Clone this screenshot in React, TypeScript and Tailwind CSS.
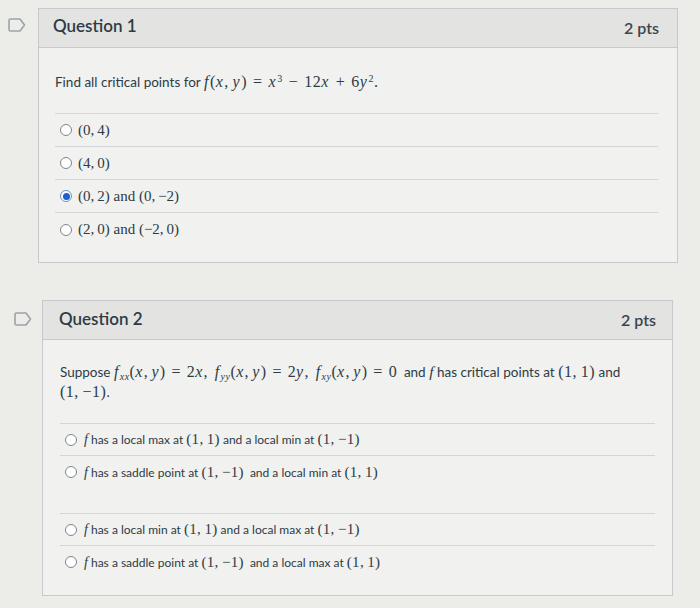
import React from "react";

const M = ({ children, className = "" }: { children: React.ReactNode; className?: string }) => (
  <span className={"font-['Liberation_Serif',serif] " + className}>{children}</span>
);
const I = ({ children }: { children: React.ReactNode }) => (
  <span className="italic pr-[1px]">{children}</span>
);
const Op = ({ children }: { children: React.ReactNode }) => (
  <span className="mx-[6px]">{children}</span>
);
const Sub = ({ children }: { children: React.ReactNode }) => (
  <sub className="text-[10px] italic tracking-[0.5px]">{children}</sub>
);

const Flag = () => (
  <svg width="18" height="14" viewBox="0 0 18 14" fill="none">
    <path d="M2.5 1 H12 L16.5 7 L12 13 H2.5 Q1 13 1 11.5 V2.5 Q1 1 2.5 1 Z" stroke="#9aa3a8" strokeWidth="1.6" strokeLinejoin="round" />
  </svg>
);

const Radio = ({ checked = false }: { checked?: boolean }) =>
  checked ? (
    <span className="w-[12px] h-[12px] rounded-full border border-[#6b8fc4] bg-white flex items-center justify-center shrink-0">
      <span className="w-[7px] h-[7px] rounded-full bg-[#1b5fd1]" />
    </span>
  ) : (
    <span className="w-[12px] h-[12px] rounded-full border border-[#7b868d] bg-white shrink-0" />
  );

const P = ({ a, b }: { a: string; b: string }) => (
  <M className="text-[15px] tracking-[0.3px]">
    ({a},&thinsp;{b})
  </M>
);

export default function App() {
  const q1opts: { node: React.ReactNode; checked?: boolean }[] = [
    { node: <M>(0,&thinsp;4)</M> },
    { node: <M>(4,&thinsp;0)</M> },
    { node: <M>(0,&thinsp;2) and (0,&thinsp;−2)</M>, checked: true },
    { node: <M>(2,&thinsp;0) and (−2,&thinsp;0)</M> },
  ];
  const F = <M className="italic text-[14px]">f</M>;
  const q2opts: React.ReactNode[] = [
    <>
      {F} has a local max at <P a="1" b="1" /> and a local min at <P a="1" b="−1" />
    </>,
    <>
      {F} has a saddle point at <P a="1" b="−1" />&nbsp;&nbsp;and a local min at <P a="1" b="1" />
    </>,
    <>
      {F} has a local min at <P a="1" b="1" /> and a local max at <P a="1" b="−1" />
    </>,
    <>
      {F} has a saddle point at <P a="1" b="−1" />&nbsp;&nbsp;and a local max at <P a="1" b="1" />
    </>,
  ];

  return (
    <div className="w-[700px] h-[608px] bg-[#ecece9] overflow-hidden font-['Lato','Open_Sans',sans-serif] text-[#2d3b45]">
      {/* Question 1 */}
      <div className="flex pt-[8px]">
        <div className="w-[38px] pl-[8px] pt-[10px]">
          <Flag />
        </div>
        <div className="w-[640px] h-[255px] border border-[#c5cacd] bg-[#f1f1ef] flex flex-col">
          <div className="h-[39px] bg-[#e3e3e1] border-b border-[#c5cacd] flex items-center justify-between pl-[14px] pr-[18px] pb-[4px]">
            <span className="text-[17px] font-semibold">Question 1</span>
            <span className="text-[16px] font-semibold text-[#3b454b] pt-[3px]">2 pts</span>
          </div>
          <div className="pl-[16px] pr-[19px] pt-[24px]">
            <div className="text-[13.5px] leading-[20px] h-[20px]">
              Find all critical points for{" "}
              <M className="text-[16px] tracking-[0.5px]">
                <I>f</I>(<I>x</I>,&thinsp;<I>y</I>)<Op>=</Op>
                <I>x</I>
                <sup className="text-[10px]">3</sup>
                <Op>−</Op>12<I>x</I>
                <Op>+</Op>6<I>y</I>
                <sup className="text-[10px]">2</sup>.
              </M>
            </div>
            <div className="mt-[21px] border-t border-[#d3d6d8]">
              {q1opts.map((o, i) => (
                <div
                  key={i}
                  className={
                    "h-[33px] flex items-center gap-[6px] pl-[5px] text-[15px] " +
                    (i < 3 ? "border-b border-[#d3d6d8]" : "")
                  }
                >
                  <Radio checked={o.checked} />
                  {o.node}
                </div>
              ))}
            </div>
          </div>
        </div>
      </div>

      {/* Question 2 */}
      <div className="flex mt-[37px]">
        <div className="w-[42px] pl-[14px] pt-[12px]">
          <Flag />
        </div>
        <div className="w-[631px] h-[296px] border border-[#c5cacd] bg-[#f1f1ef] flex flex-col">
          <div className="h-[39px] bg-[#e3e3e1] border-b border-[#c5cacd] flex items-center justify-between pl-[16px] pr-[16px] pb-[2px]">
            <span className="text-[17px] font-semibold">Question 2</span>
            <span className="text-[16px] font-semibold text-[#3b454b] pt-[2px]">2 pts</span>
          </div>
          <div className="pl-[17px] pr-[17px] pt-[22px]">
            <div className="text-[13.5px] leading-[20px] whitespace-nowrap">
              Suppose{" "}
              <M className="text-[16px] tracking-[0.3px]">
                <I>f</I>
                <Sub>xx</Sub>(<I>x</I>,&thinsp;<I>y</I>)<Op>=</Op>2<I>x</I>,&thinsp;&thinsp;<I>f</I>
                <Sub>yy</Sub>(<I>x</I>,&thinsp;<I>y</I>)<Op>=</Op>2<I>y</I>,&thinsp;&thinsp;<I>f</I>
                <Sub>xy</Sub>(<I>x</I>,&thinsp;<I>y</I>)<Op>=</Op>0
              </M>{" "}
              &nbsp;and <M className="italic text-[15.5px]">f</M> has critical points at{" "}
              <M className="text-[16px] tracking-[0.5px]">(1,&thinsp;1)</M> and
              <br />
              <M className="text-[16px] tracking-[0.5px]">(1,&thinsp;−1)</M>.
            </div>
            <div className="mt-[21px] border-t border-[#d3d6d8]">
              {q2opts.map((o, i) => (
                <div
                  key={i}
                  className={
                    "pl-[5px] text-[12px] " +
                    (i === 1 ? "h-[58px] pt-[5px] " : "h-[32px] flex items-center ") +
                    (i < 3 ? "border-b border-[#d3d6d8]" : "")
                  }
                >
                  <div className="flex items-center gap-[7px]">
                    <Radio />
                    <span>{o}</span>
                  </div>
                </div>
              ))}
            </div>
          </div>
        </div>
      </div>
    </div>
  );
}
